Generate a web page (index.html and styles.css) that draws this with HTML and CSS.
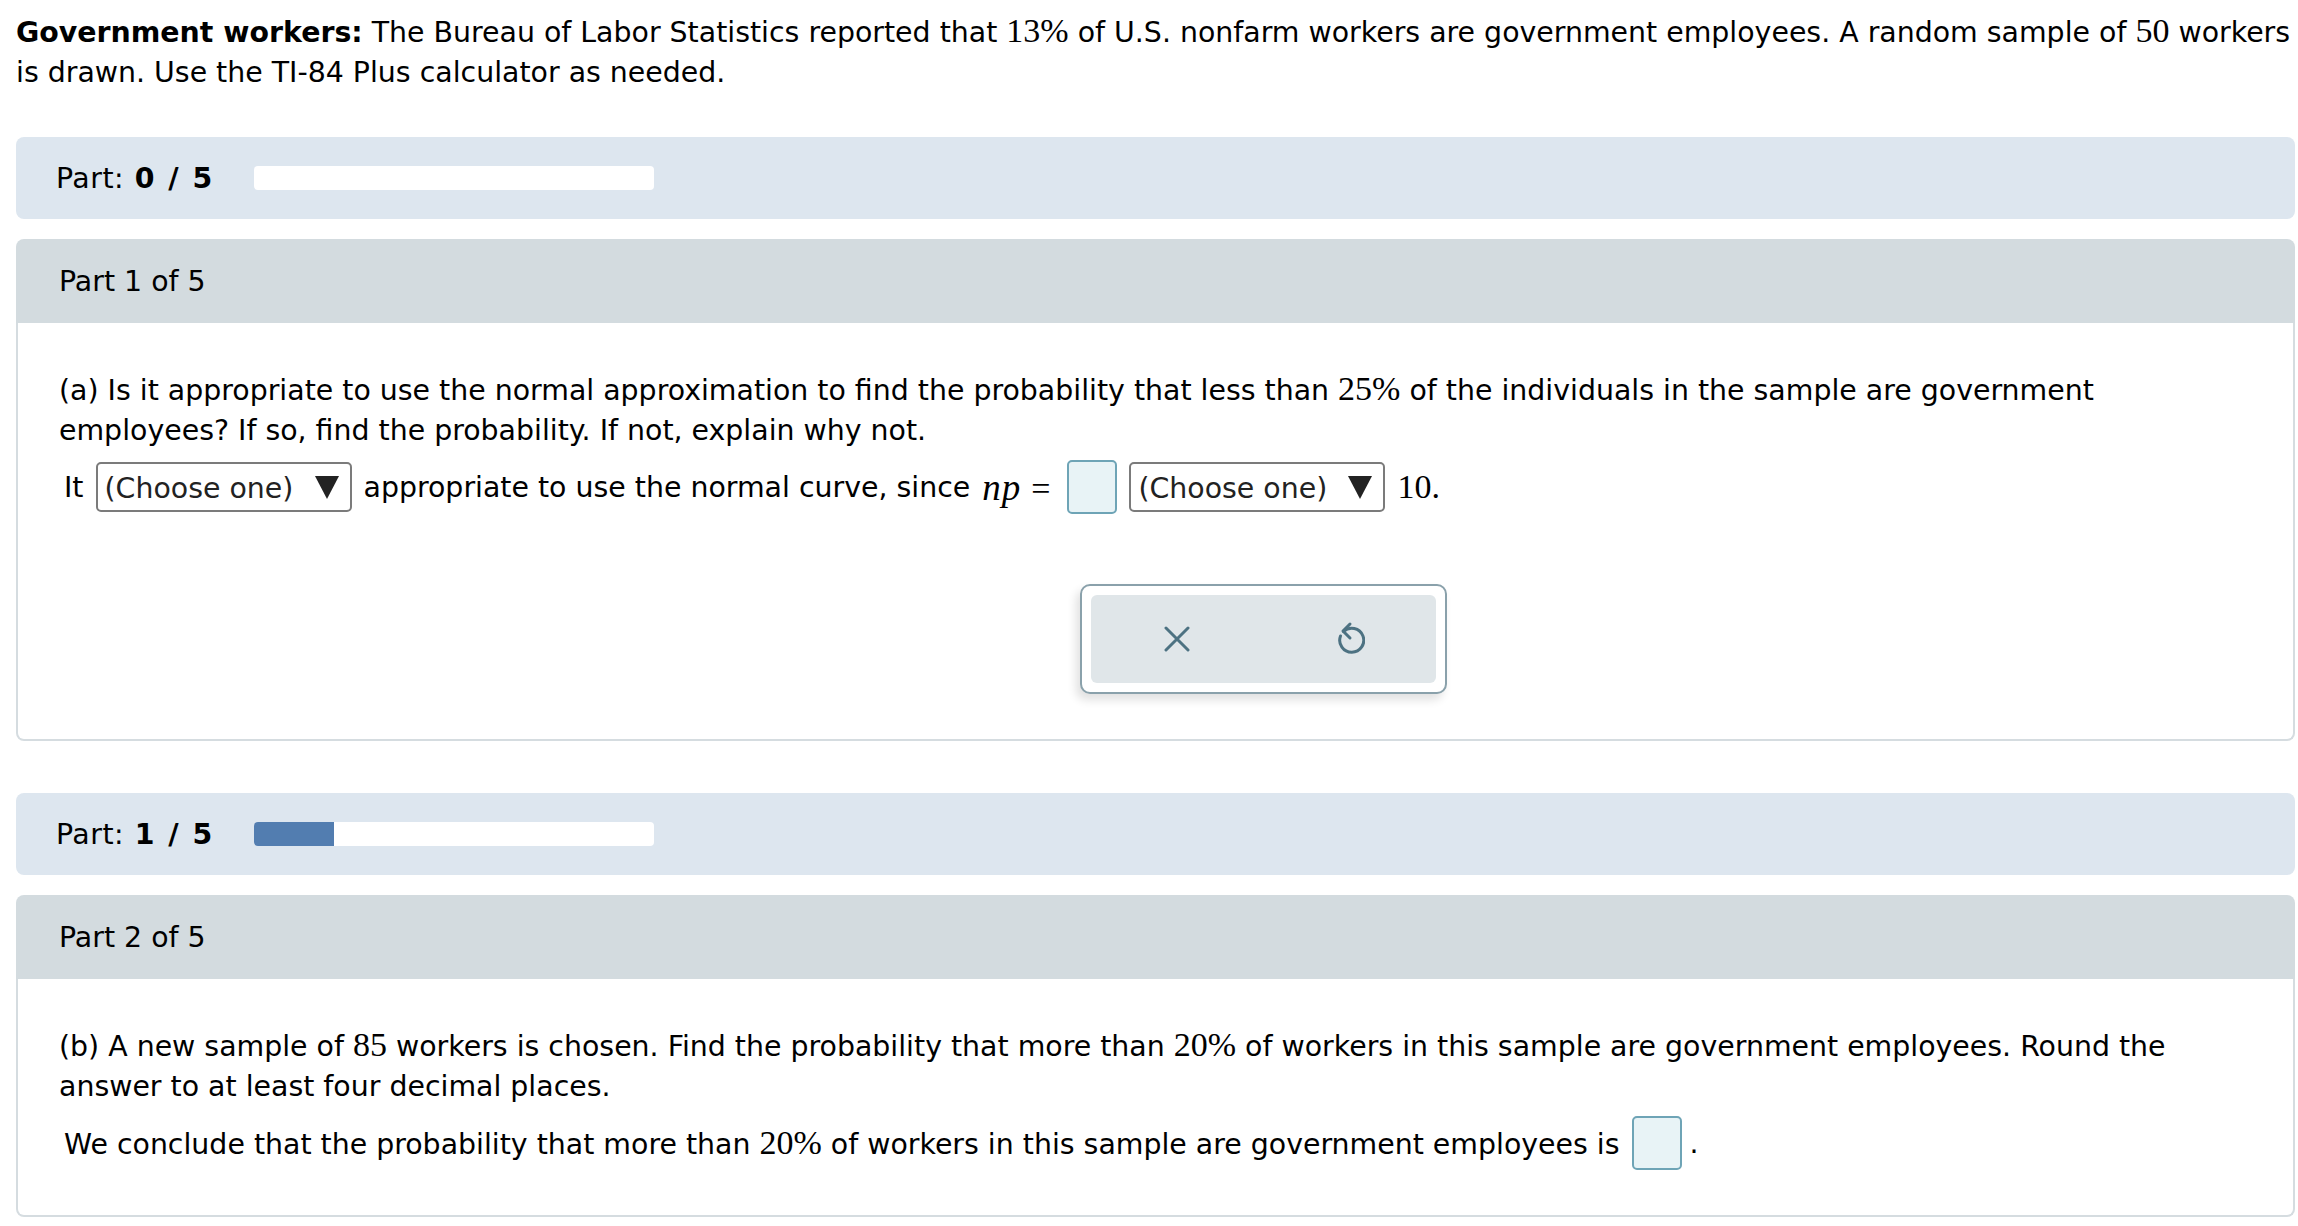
FILE: index.html
```html
<!DOCTYPE html>
<html lang="en">

<head>
    <meta charset="UTF-8">
    <meta name="viewport" content="width=device-width, initial-scale=1.0">
    <link rel="stylesheet" href="styles.css">
    <title>Government workers</title>
</head>

<body>
    <div class="page">
        <p class="intro">
            <b>Government workers:</b> The Bureau of Labor Statistics reported that <span class="math">13%</span> of U.S. nonfarm workers are government employees. A random sample of <span class="math">50</span> workers is drawn. Use the TI-84 Plus calculator as needed.
        </p>

        <!-- progress 0/5 -->
        <div class="progress">
            <div class="progress-label">Part: <b>0 / 5</b></div>
            <div class="bar"><div class="bar-fill" style="width: 0%"></div></div>
        </div>

        <div class="part">
            <div class="part-head">Part 1 of 5</div>
            <div class="part-body">
                <p class="question">(a) Is it appropriate to use the normal approximation to find the probability that less than <span class="math">25%</span> of the individuals in the sample are government employees? If so, find the probability. If not, explain why not.</p>
                <div class="answer-row">
                    <span>It</span>
                    <span class="choose">
                        <span class="choose-text">(Choose one)</span>
                        <svg class="caret" width="24" height="23" viewBox="0 0 24 23"><polygon points="0,0 24,0 12,23" fill="#222"/></svg>
                    </span>
                    <span>appropriate to use the normal curve, since</span>
                    <span class="math var">np<span class="eq">=</span></span>
                    <span class="blank np-blank"></span>
                    <span class="choose">
                        <span class="choose-text">(Choose one)</span>
                        <svg class="caret" width="24" height="23" viewBox="0 0 24 23"><polygon points="0,0 24,0 12,23" fill="#222"/></svg>
                    </span>
                    <span class="math">10.</span>
                </div>

                <div class="tools">
                    <div class="tools-inner">
                        <div class="tool">
                            <svg width="26" height="26" viewBox="0 0 26 26" fill="none" stroke="#4d7282" stroke-width="3" stroke-linecap="round">
                                <path d="M2 2 L24 24 M24 2 L2 24"/>
                            </svg>
                        </div>
                        <div class="tool">
                            <svg width="30" height="36" viewBox="0 0 30 36" fill="none" stroke="#4d7282" stroke-width="3" stroke-linecap="round" stroke-linejoin="round">
                                <path d="M5.5 15 A12 12 0 1 0 8.5 10.5"/>
                                <path d="M15 3 L8 10 L15 17"/>
                            </svg>
                        </div>
                    </div>
                </div>
            </div>
        </div>

        <!-- progress 1/5 -->
        <div class="progress">
            <div class="progress-label">Part: <b>1 / 5</b></div>
            <div class="bar"><div class="bar-fill" style="width: 20%"></div></div>
        </div>

        <div class="part">
            <div class="part-head">Part 2 of 5</div>
            <div class="part-body">
                <p class="question">(b) A new sample of <span class="math">85</span> workers is chosen. Find the probability that more than <span class="math">20%</span> of workers in this sample are government employees. Round the answer to at least four decimal places.</p>
                <div class="answer-row">
                    <span>We conclude that the probability that more than <span class="math">20%</span> of workers in this sample are government employees is</span>
                    <span class="blank"></span>
                    <span class="dot">.</span>
                </div>
            </div>
        </div>
    </div>
</body>

</html>
```

FILE: styles.css
```css
body {
    font-family: "DejaVu Sans", Verdana, sans-serif;
    font-size: 28.4px;
    color: #000;
    margin: 0;
    padding: 0;
}

.page {
    padding: 11px 3px 60px 16px;
}

.intro {
    margin: 0;
    line-height: 40px;
}

.math {
    font-family: "Liberation Serif", "Times New Roman", serif;
    font-size: 34px;
}

.var {
    font-style: italic;
    font-size: 37px;
    letter-spacing: 1px;
}

.var .eq {
    font-style: normal;
    font-size: 34px;
    margin-left: 10px;
}

/* progress strip */
.progress {
    display: flex;
    align-items: center;
    height: 82px;
    margin-top: 44px;
    padding-left: 40px;
    background-color: #dde6ef;
    border-radius: 8px;
}

.progress-label {
    width: 198px;
    letter-spacing: 0.5px;
    word-spacing: 1px;
}

.progress-label b {
    word-spacing: 3px;
}

.bar {
    width: 400px;
    height: 24px;
    background-color: #fff;
    border-radius: 4px;
    overflow: hidden;
}

.bar-fill {
    height: 100%;
    background-color: #527db0;
}

/* part panels */
.part {
    margin-top: 20px;
}

.part + .progress {
    margin-top: 52px;
}

.part-head {
    display: flex;
    align-items: center;
    height: 84px;
    padding-left: 43px;
    background-color: #d3dbdf;
    border-radius: 8px 8px 0 0;
}

.part-body {
    padding: 46px 41px 45px 41px;
    border: 2px solid #d5dce0;
    border-top: none;
    border-radius: 0 0 8px 8px;
}

.question {
    margin: 0;
    line-height: 40px;
}

.answer-row {
    display: flex;
    align-items: center;
    gap: 12px;
    height: 54px;
    margin-top: 9px;
    padding-left: 5px;
    white-space: nowrap;
}

.choose {
    display: inline-flex;
    align-items: center;
    justify-content: space-between;
    box-sizing: border-box;
    width: 256px;
    height: 50px;
    padding: 2px 11px 0 7px;
    border: 2px solid #7b7b7b;
    border-radius: 5px;
    color: #222;
}

.caret {
    margin-top: -2px;
}

.blank {
    display: inline-block;
    box-sizing: border-box;
    width: 50px;
    height: 54px;
    background-color: #e8f3f6;
    border: 2px solid #6ea4b6;
    border-radius: 5px;
}

.np-blank {
    margin-left: 4px;
}

.dot {
    margin-left: -4px;
}

/* clear / reset box */
.tools {
    box-sizing: border-box;
    width: 367px;
    height: 110px;
    margin: 70px 0 0 1021px;
    padding: 9px;
    background-color: #fff;
    border: 2px solid #8aa1ab;
    border-radius: 10px;
    box-shadow: -4px 6px 10px rgba(0, 0, 0, 0.12);
}

.tools-inner {
    display: flex;
    height: 100%;
    background-color: #e0e6e9;
    border-radius: 6px;
}

.tool {
    flex: 1;
    display: flex;
    align-items: center;
    justify-content: center;
}
```
